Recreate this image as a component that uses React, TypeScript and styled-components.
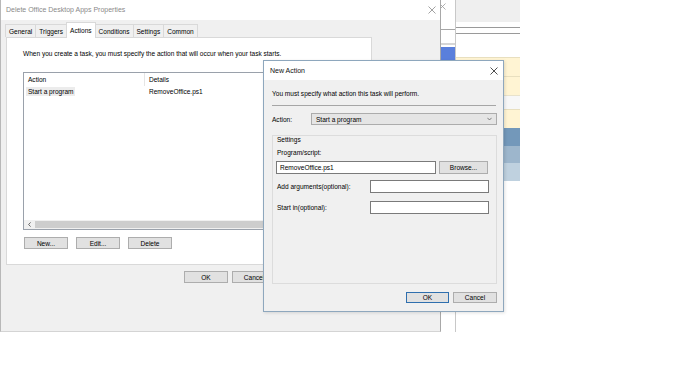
import styled, { createGlobalStyle } from "styled-components";

const GlobalStyle = createGlobalStyle`
    html, body {
        margin: 0;
        padding: 0;
        background: #fff;
    }
    body {
        font-family: "Liberation Sans", Arial, sans-serif;
        font-size: 6.55px;
        color: #000;
    }
`;

const Desktop = styled.div`
    position: relative;
    width: 690px;
    height: 388px;
    background: #fff;
    overflow: hidden;
`;

/* ---------- back window: task properties ---------- */

const PropertiesWindow = styled.div`
    position: absolute;
    left: 0;
    top: 0;
    width: 441px;
    height: 332px;
    box-sizing: border-box;
    border-left: 1px solid #b8b8b8;
    border-right: 1px solid #a8a8a8;
    border-bottom: 1px solid #d4d4d4;
    background: #f0f0f0;
    display: flex;
    flex-direction: column;
`;

const TitleBar = styled.div<{ $height: number; $left: number; $right: number }>`
    height: ${(p) => p.$height}px;
    flex-shrink: 0;
    background: #fff;
    display: flex;
    align-items: center;
    justify-content: space-between;
    padding: 0 ${(p) => p.$right}px 0 ${(p) => p.$left}px;
`;

const WindowTitle = styled.span<{ $inactive?: boolean }>`
    font-size: 7px;
    color: ${(p) => (p.$inactive ? "#8a8a8a" : "#111")};
    line-height: 8px;
`;

const CloseGlyph = styled.svg`
    width: 8px;
    height: 8px;
    display: block;
`;

const TabStrip = styled.div`
    height: 16px;
    margin-top: 2px;
    margin-bottom: -1px;
    padding-left: 5px;
    display: flex;
    align-items: flex-end;
    position: relative;
    z-index: 1;
`;

const Tab = styled.div<{ $active?: boolean }>`
    box-sizing: border-box;
    height: ${(p) => (p.$active ? 16 : 13)}px;
    margin-bottom: ${(p) => (p.$active ? 0 : 1)}px;
    margin-left: -1px;
    padding: 0 3px;
    display: flex;
    align-items: center;
    border: 1px solid #d9d9d9;
    border-bottom: none;
    background: ${(p) => (p.$active ? "#fff" : "#f0f0f0")};
    white-space: nowrap;
`;

const TabPanel = styled.div`
    box-sizing: border-box;
    margin-left: 5px;
    width: 366px;
    height: 228px;
    border: 1px solid #d9d9d9;
    background: #fff;
    padding: 12px 0 0 16px;
    display: flex;
    flex-direction: column;
`;

const Line = styled.div`
    line-height: 8px;
    height: 8px;
    white-space: nowrap;
`;

const ListView = styled.div`
    margin-top: 14px;
    width: 330px;
    height: 158px;
    box-sizing: border-box;
    border: 1px solid #9aa1ab;
    display: flex;
    flex-direction: column;
`;

const ListHeader = styled.div`
    height: 13px;
    display: flex;
    align-items: center;
`;

const ListCell = styled.div<{ $width?: number }>`
    width: ${(p) => (p.$width ? `${p.$width}px` : "auto")};
    box-sizing: border-box;
    padding-left: 4px;
    white-space: nowrap;
`;

const HeaderCell = styled(ListCell)`
    height: 13px;
    display: flex;
    align-items: center;
    border-right: 1px solid #e5e5e5;
`;

const ListRow = styled.div`
    height: 10px;
    display: flex;
    align-items: center;
`;

const SelectedText = styled.span`
    background: #ececec;
    margin-left: -2px;
    padding: 1px 2px;
`;

const ListSpacer = styled.div`
    flex: 1;
`;

const HScrollbar = styled.div`
    height: 9px;
    background: #f0f0f0;
    display: flex;
    align-items: stretch;
`;

const ScrollArrow = styled.div`
    width: 11px;
    display: flex;
    align-items: center;
    justify-content: center;
`;

const ScrollThumb = styled.div`
    flex: 1;
    margin: 1px 0;
    background: #cdcdcd;
`;

const ButtonRow = styled.div<{ $top: number; $gap: number; $left?: number; $end?: boolean }>`
    display: flex;
    gap: ${(p) => p.$gap}px;
    margin-top: ${(p) => p.$top}px;
    padding-left: ${(p) => p.$left ?? 0}px;
    justify-content: ${(p) => (p.$end ? "flex-end" : "flex-start")};
`;

const Button = styled.div<{ $width?: number; $height?: number; $default?: boolean }>`
    box-sizing: border-box;
    width: ${(p) => p.$width ?? 44}px;
    height: ${(p) => p.$height ?? 12}px;
    background: #e1e1e1;
    border: 1px solid ${(p) => (p.$default ? "#2f6fae" : "#adadad")};
    display: flex;
    align-items: center;
    justify-content: center;
    white-space: nowrap;
`;

/* ---------- things behind the windows ---------- */

const SideStrip = styled.div`
    position: absolute;
    left: 441px;
    top: 0;
    width: 15px;
    height: 332px;
    box-sizing: border-box;
    border-right: 1px solid #c8c8c8;
    background: #fff;
    display: flex;
    flex-direction: column;
    overflow: hidden;
`;

const StripClose = styled.svg`
    width: 7px;
    height: 7px;
    margin: 3px 0 0 -2px;
    display: block;
    flex-shrink: 0;
`;

const Band = styled.div<{ $h: number; $bg: string; $top?: number }>`
    flex-shrink: 0;
    height: ${(p) => p.$h}px;
    margin-top: ${(p) => p.$top ?? 0}px;
    background: ${(p) => p.$bg};
`;

const Sheet = styled.div`
    position: absolute;
    left: 456px;
    top: 0;
    width: 64px;
    display: flex;
    flex-direction: column;
`;

const sheetBands = [
    { h: 22, bg: "#efefef" },
    { h: 5, bg: "#fff" },
    { h: 1, bg: "#9a9a9a" },
    { h: 5, bg: "#fff" },
    { h: 1, bg: "#9a9a9a" },
    { h: 23, bg: "#fff" },
    { h: 1, bg: "#e8dfbf" },
    { h: 18, bg: "#fff4d3" },
    { h: 1, bg: "#e8dfbf" },
    { h: 18, bg: "#fff4d3" },
    { h: 1, bg: "#e8e2cc" },
    { h: 13, bg: "#f7f7f7" },
    { h: 1, bg: "#e8dfbf" },
    { h: 18, bg: "#fff4d3" },
    { h: 18, bg: "#7398ba" },
    { h: 17, bg: "#9db6cc" },
    { h: 18, bg: "#bfd1df" },
];

/* ---------- front dialog: New Action ---------- */

const ActionDialog = styled.div`
    position: absolute;
    left: 263px;
    top: 60px;
    width: 241px;
    height: 252px;
    box-sizing: border-box;
    border: 1px solid #8ea7bd;
    background: #f0f0f0;
    box-shadow: 1px 1px 3px rgba(0, 0, 0, 0.12);
    display: flex;
    flex-direction: column;
`;

const DialogBody = styled.div`
    padding: 10px 6px 0 8px;
    display: flex;
    flex-direction: column;
`;

const Separator = styled.div`
    margin-top: 7px;
    height: 1px;
    margin-right: 1px;
    background: #a6a6a6;
`;

const FieldRow = styled.div<{ $top: number; $shift?: number }>`
    margin-top: ${(p) => p.$top}px;
    margin-left: ${(p) => p.$shift ?? 0}px;
    display: flex;
    align-items: center;
    gap: ${(p) => (p.$shift ? 3 : 0)}px;
`;

const FieldLabel = styled.div<{ $width: number }>`
    width: ${(p) => p.$width}px;
    flex-shrink: 0;
    white-space: nowrap;
`;

const ComboBox = styled.div`
    flex: 1;
    height: 12px;
    box-sizing: border-box;
    background: #e5e5e5;
    border: 1px solid #acacac;
    padding: 0 4px 0 4px;
    display: flex;
    align-items: center;
    justify-content: space-between;
`;

const Chevron = styled.svg`
    width: 5px;
    height: 4px;
    display: block;
`;

const GroupBox = styled.div`
    margin-top: 10px;
    height: 149px;
    box-sizing: border-box;
    border: 1px solid #dcdcdc;
    padding: 0 4px;
    display: flex;
    flex-direction: column;
`;

const TextBox = styled.div<{ $width: number }>`
    width: ${(p) => p.$width}px;
    height: 13px;
    box-sizing: border-box;
    background: #fff;
    border: 1px solid #7a7a7a;
    padding-left: 3px;
    display: flex;
    align-items: center;
    white-space: nowrap;
`;

export default function App() {
    const tabs = ["General", "Triggers", "Actions", "Conditions", "Settings", "Common"];

    return (
        <>
            <GlobalStyle />
            <Desktop>
                <SideStrip>
                    <StripClose viewBox="0 0 7 7">
                        <path d="M0.5 0.5 L6.5 6.5 M6.5 0.5 L0.5 6.5" stroke="#9a9a9a" strokeWidth="0.8" />
                    </StripClose>
                    <Band $h={1} $bg="#a6a6a6" $top={19} />
                    <Band $h={2} $bg="#d6d6d6" $top={13} />
                    <Band $h={13} $bg="#5a7fdc" $top={2} />
                </SideStrip>

                <Sheet>
                    {sheetBands.map((b, i) => (
                        <Band key={i} $h={b.h} $bg={b.bg} />
                    ))}
                </Sheet>

                <PropertiesWindow>
                    <TitleBar $height={20} $left={5} $right={4}>
                        <WindowTitle $inactive>Delete Office Desktop Apps Properties</WindowTitle>
                        <CloseGlyph viewBox="0 0 8 8">
                            <path d="M0.5 0.5 L7.5 7.5 M7.5 0.5 L0.5 7.5" stroke="#8a8a8a" strokeWidth="0.8" />
                        </CloseGlyph>
                    </TitleBar>
                    <TabStrip>
                        {tabs.map((t) => (
                            <Tab key={t} $active={t === "Actions"}>
                                {t}
                            </Tab>
                        ))}
                    </TabStrip>
                    <TabPanel>
                        <Line>
                            When you create a task, you must specify the action that will occur when your task starts.
                        </Line>
                        <ListView>
                            <ListHeader>
                                <HeaderCell $width={121}>Action</HeaderCell>
                                <HeaderCell $width={120}>Details</HeaderCell>
                            </ListHeader>
                            <ListRow>
                                <ListCell $width={121}>
                                    <SelectedText>Start a program</SelectedText>
                                </ListCell>
                                <ListCell>RemoveOffice.ps1</ListCell>
                            </ListRow>
                            <ListSpacer />
                            <HScrollbar>
                                <ScrollArrow>
                                    <svg width="3" height="5" viewBox="0 0 3 5">
                                        <path d="M2.6 0.4 L0.6 2.5 L2.6 4.6" fill="none" stroke="#444" strokeWidth="0.8" />
                                    </svg>
                                </ScrollArrow>
                                <ScrollThumb />
                            </HScrollbar>
                        </ListView>
                        <ButtonRow $top={7} $gap={8} $left={1}>
                            <Button>New...</Button>
                            <Button>Edit...</Button>
                            <Button>Delete</Button>
                        </ButtonRow>
                    </TabPanel>
                    <ButtonRow $top={6} $gap={4} $left={183}>
                        <Button>OK</Button>
                        <Button>Cancel</Button>
                    </ButtonRow>
                </PropertiesWindow>

                <ActionDialog>
                    <TitleBar $height={19} $left={6} $right={5}>
                        <WindowTitle>New Action</WindowTitle>
                        <CloseGlyph viewBox="0 0 8 8">
                            <path d="M0.5 0.5 L7.5 7.5 M7.5 0.5 L0.5 7.5" stroke="#222" strokeWidth="0.8" />
                        </CloseGlyph>
                    </TitleBar>
                    <DialogBody>
                        <Line>You must specify what action this task will perform.</Line>
                        <Separator />
                        <FieldRow $top={7}>
                            <FieldLabel $width={39}>Action:</FieldLabel>
                            <ComboBox>
                                <span>Start a program</span>
                                <Chevron viewBox="0 0 5 4">
                                    <path d="M0.4 0.8 L2.5 3 L4.6 0.8" fill="none" stroke="#555" strokeWidth="0.7" />
                                </Chevron>
                            </ComboBox>
                        </FieldRow>
                        <GroupBox>
                            <Line>Settings</Line>
                            <FieldRow $top={5}>
                                <Line>Program/script:</Line>
                            </FieldRow>
                            <FieldRow $top={4} $shift={-1}>
                                <TextBox $width={160}>RemoveOffice.ps1</TextBox>
                                <Button $width={49} $height={13}>
                                    Browse...
                                </Button>
                            </FieldRow>
                            <FieldRow $top={6}>
                                <FieldLabel $width={93}>Add arguments(optional):</FieldLabel>
                                <TextBox $width={119} />
                            </FieldRow>
                            <FieldRow $top={8}>
                                <FieldLabel $width={93}>Start in(optional):</FieldLabel>
                                <TextBox $width={119} />
                            </FieldRow>
                        </GroupBox>
                        <ButtonRow $top={8} $gap={4} $end>
                            <Button $width={43} $height={11} $default>
                                OK
                            </Button>
                            <Button $width={44} $height={11}>
                                Cancel
                            </Button>
                        </ButtonRow>
                    </DialogBody>
                </ActionDialog>
            </Desktop>
        </>
    );
}
